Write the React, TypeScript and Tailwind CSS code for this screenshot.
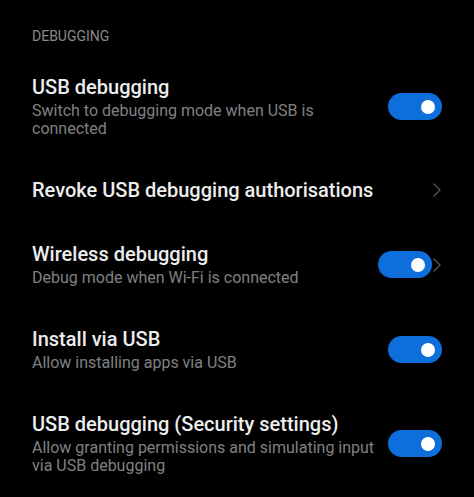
import React from 'react';

type Row = {
  title: string;
  subtitle?: string;
  toggle?: boolean;
  chevron?: boolean;
};

const rows: Row[] = [
  { title: 'USB debugging', subtitle: 'Switch to debugging mode when USB is connected', toggle: true },
  { title: 'Revoke USB debugging authorisations', chevron: true },
  { title: 'Wireless debugging', subtitle: 'Debug mode when Wi-Fi is connected', toggle: true, chevron: true },
  { title: 'Install via USB', subtitle: 'Allow installing apps via USB', toggle: true },
  {
    title: 'USB debugging (Security settings)',
    subtitle: 'Allow granting permissions and simulating input via USB debugging',
    toggle: true,
  },
];

const Toggle = () => (
  <div className="w-[54px] h-[27px] rounded-full bg-[#0e6fdc] flex items-center justify-end pr-[7px] shrink-0">
    <div className="w-[14px] h-[14px] rounded-full bg-white"></div>
  </div>
);

const Chevron = () => (
  <svg width="10" height="16" viewBox="0 0 10 16" className="shrink-0">
    <polyline points="2,2 8,8 2,14" fill="none" stroke="#555555" strokeWidth="1.4" strokeLinecap="round" strokeLinejoin="round" />
  </svg>
);

const App: React.FC = () => {
  return (
    <div className="w-[474px] h-[497px] bg-black overflow-hidden font-['Roboto',sans-serif] px-8">
      <div className="pt-[26px] mb-[9px] text-[14px] leading-[20px] text-[#8a8a8a] uppercase">Debugging</div>

      {rows.map((row) => (
        <div key={row.title} className="flex items-center py-5">
          <div className="flex-1 min-w-0 pr-2">
            <div className="text-[20px] leading-[24px] font-medium text-[#ededed]">{row.title}</div>
            {row.subtitle && (
              <div className="mt-[3px] text-[16px] leading-[18px] text-[#808080]">{row.subtitle}</div>
            )}
          </div>
          {row.toggle && <Toggle />}
          {row.chevron && <Chevron />}
        </div>
      ))}
    </div>
  );
};

export default App;
